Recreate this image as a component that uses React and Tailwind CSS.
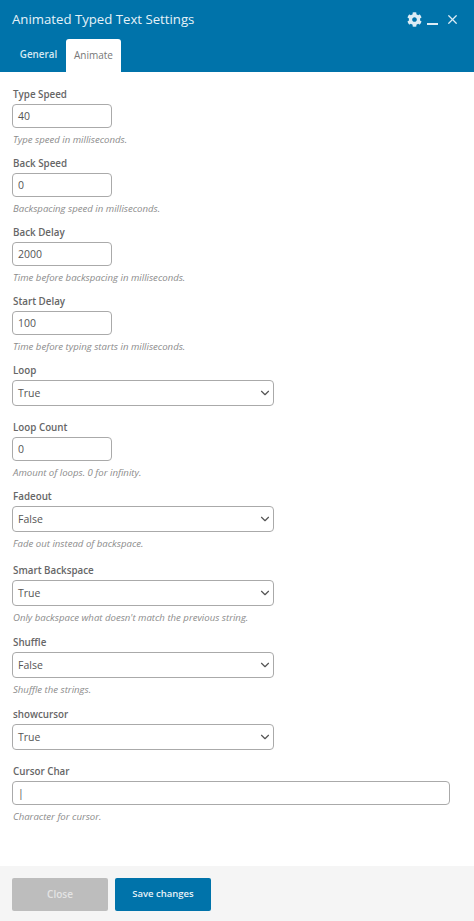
import React from 'react';
import { ChevronDown, X } from 'lucide-react';
import { FaCog } from 'react-icons/fa';

const fields = [
  { label: 'Type Speed', value: '40', help: 'Type speed in milliseconds.', box: 'h-[69px]' },
  { label: 'Back Speed', value: '0', help: 'Backspacing speed in milliseconds.', box: 'h-[69px]' },
  { label: 'Back Delay', value: '2000', help: 'Time before backspacing in milliseconds.', box: 'h-[69px]' },
  { label: 'Start Delay', value: '100', help: 'Time before typing starts in milliseconds.', box: 'h-[69px]' },
  { label: 'Loop', value: 'True', select: true, box: 'h-[57px]' },
  { label: 'Loop Count', value: '0', help: 'Amount of loops. 0 for infinity.', box: 'h-[69px]' },
  { label: 'Fadeout', value: 'False', select: true, help: 'Fade out instead of backspace.', box: 'h-[74px]' },
  { label: 'Smart Backspace', value: 'True', select: true, help: "Only backspace what doesn't match the previous string.", box: 'h-[72px]' },
  { label: 'Shuffle', value: 'False', select: true, help: 'Shuffle the strings.', box: 'h-[72px]' },
  { label: 'showcursor', value: 'True', select: true, box: 'h-[57px]' },
  { label: 'Cursor Char', value: '|', wide: true, help: 'Character for cursor.', box: 'h-[69px]' },
];

const Field = ({ field }) => {
  return (
    <div className={`${field.box} flex flex-col`}>
      <label className="h-[18px] pl-[1px] text-[9.8px] leading-[18px] font-semibold text-[#666]">{field.label}</label>
      {field.select ? (
        <div className="w-[262px] h-[26px] shrink-0 flex items-center justify-between pl-[5px] pr-[1px] bg-white border border-[#aaa] rounded-[4px] text-[10.5px] text-[#555]">
          <span className="pt-[2px]">{field.value}</span>
          <ChevronDown size={14} strokeWidth={2} className="text-[#555]" />
        </div>
      ) : (
        <div className={`${field.wide ? 'w-[438px]' : 'w-[100px]'} h-[24px] shrink-0 flex items-center pl-[5px] pt-[2px] bg-white border border-[#aaa] rounded-[4px] text-[10.5px] text-[#555]`}>
          {field.value}
        </div>
      )}
      {field.help && (
        <p className={`${field.select ? 'mt-[5px]' : 'mt-[5px]'} pl-[1px] text-[9.6px] leading-[14px] italic text-[#8c8c8c]`}>{field.help}</p>
      )}
    </div>
  );
};

const App = () => {
  return (
    <div className="w-[474px] h-[921px] flex flex-col bg-white font-['Open_Sans',sans-serif]">
      <div className="h-[72px] shrink-0 flex flex-col justify-between bg-[#0073aa]">
        <div className="flex items-center justify-between pt-[9px] pl-[12px] pr-[14px]">
          <h2 className="text-[13.2px] leading-[20px] text-[#e6f2f8]">Animated Typed Text Settings</h2>
          <div className="flex items-center text-[#dcecf5]">
            <FaCog size={15} />
            <span className="w-[11px] h-[2px] ml-[5px] mt-[10px] bg-[#dcecf5]" />
            <X size={15} strokeWidth={2} className="ml-[7px]" />
          </div>
        </div>
        <div className="flex pl-[9px]">
          <div className="w-[57px] h-[33px] flex items-center justify-center pl-[2px] text-[9.8px] font-semibold text-[#d5e8f2]">General</div>
          <div className="w-[55px] h-[33px] flex items-center justify-center rounded-t-[3px] bg-white text-[10px] text-[#777]">Animate</div>
        </div>
      </div>
      <div className="flex-1 pt-[14px] pl-[12px]">
        {fields.map((field) => (
          <Field key={field.label} field={field} />
        ))}
      </div>
      <div className="h-[55px] shrink-0 flex gap-[7px] pt-[12px] pl-[12px] bg-[#f5f5f5]">
        <button className="w-[96px] h-[33px] rounded-[2px] bg-[#bdbdbd] text-[10px] font-semibold text-[#e4e4e4]">Close</button>
        <button className="w-[96px] h-[33px] rounded-[2px] bg-[#0073aa] text-[9.5px] font-semibold text-[#e6f2f8]">Save changes</button>
      </div>
    </div>
  );
};

export default App;
